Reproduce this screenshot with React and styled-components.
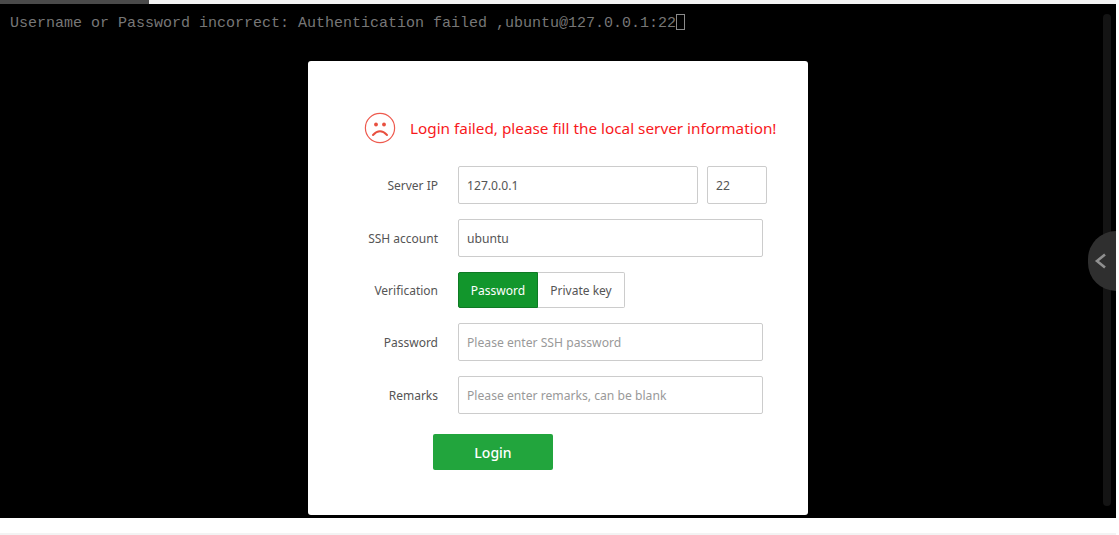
import React from "react";
import styled, { createGlobalStyle } from "styled-components";

const Global = createGlobalStyle`
  html, body { margin: 0; padding: 0; background: #fff; }
  body { font-family: "Noto Sans", "Open Sans", sans-serif; }
`;

const Page = styled.div`
  width: 1116px;
  height: 535px;
  display: flex;
  flex-direction: column;
  overflow: hidden;
`;

const TabBar = styled.div`
  height: 4px;
  flex: none;
  background: #f3f3f3;
`;

const ActiveTab = styled.div`
  width: 149px;
  height: 100%;
  background: #4a4a4a;
`;

const Terminal = styled.div`
  position: relative;
  height: 514px;
  flex: none;
  background: #000;
  padding: 10px 10px 0;
  box-sizing: border-box;
`;

const TermLine = styled.div`
  display: flex;
  align-items: center;
  height: 16px;
  font: 15px/16px "Liberation Mono", monospace;
  color: #777;
  white-space: pre;
`;

const TermText = styled.span`
  display: block;
  padding-top: 3px;
`;

const Cursor = styled.span`
  display: inline-block;
  width: 9px;
  height: 16px;
  box-sizing: border-box;
  border: 1px solid #8a8a8a;
`;

const Scrollbar = styled.div`
  position: absolute;
  top: 10px;
  right: 5px;
  width: 8px;
  height: 492px;
  border-radius: 4px;
  background: #141414;
`;

const Handle = styled.div`
  position: absolute;
  right: 0;
  top: 227px;
  width: 28px;
  height: 60px;
  border-radius: 30px 0 0 30px;
  background: #2f2f2f;
  display: flex;
  align-items: center;
  padding-left: 6px;
  box-sizing: border-box;
`;

const Modal = styled.div`
  position: absolute;
  left: 308px;
  top: 57px;
  width: 500px;
  height: 454px;
  box-sizing: border-box;
  background: #fff;
  border-radius: 3px;
  padding-top: 51px;
`;

const Title = styled.div`
  display: flex;
  align-items: center;
  gap: 14px;
  height: 32px;
  margin: 0 0 22px 56px;
  font-size: 15.3px;
  color: #f8191c;
  white-space: nowrap;
`;

const Row = styled.div`
  display: flex;
  align-items: center;
  height: ${(p) => p.$h || 38}px;
  margin-bottom: ${(p) => p.$mb ?? 15}px;
`;

const Label = styled.label`
  flex: none;
  width: 130px;
  margin-right: 20px;
  text-align: right;
  font-size: 12px;
  color: #555;
`;

const Input = styled.input`
  box-sizing: border-box;
  width: ${(p) => p.$w || 305}px;
  height: 38px;
  margin-right: ${(p) => p.$mr || 0}px;
  padding: 0 8px;
  border: 1px solid #ccc;
  border-radius: 2px;
  outline: none;
  background: #fff;
  font: 12.15px "Noto Sans", sans-serif;
  color: #555;
  &::placeholder { color: #999; opacity: 1; }
`;

const Segmented = styled.div`
  display: flex;
  height: 36px;
`;

const Segment = styled.div`
  box-sizing: border-box;
  display: flex;
  align-items: center;
  justify-content: center;
  height: 36px;
  width: ${(p) => p.$w}px;
  font-size: 12px;
  border: 1px solid ${(p) => (p.$active ? "#0e7a24" : "#ccc")};
  border-left-width: ${(p) => (p.$active ? 1 : 0)}px;
  border-radius: ${(p) => (p.$active ? "2px 0 0 2px" : "0 2px 2px 0")};
  background: ${(p) => (p.$active ? "#12962c" : "#fff")};
  color: ${(p) => (p.$active ? "#fff" : "#555")};
`;

const LoginButton = styled.button`
  display: block;
  width: 120px;
  height: 36px;
  margin: 20px 0 0 125px;
  padding: 0;
  border: 0;
  border-radius: 2px;
  background: #22a53d;
  color: #fff;
  font: 500 14px "Noto Sans", sans-serif;
`;

const Footer = styled.div`
  flex: 1;
  background: #fff;
  display: flex;
  align-items: flex-end;
`;

const FooterLine = styled.div`
  width: 100%;
  height: 2px;
  background: #f3f3f3;
`;

const Sad = () => (
  <svg width="32" height="32" viewBox="0 0 32 32" fill="none" stroke="#ee5a4e">
    <circle cx="16" cy="16" r="14.6" strokeWidth="1.2" />
    <circle cx="12" cy="12.5" r="1.9" fill="#e8503f" stroke="none" />
    <circle cx="20" cy="12.5" r="1.9" fill="#e8503f" stroke="none" />
    <path d="M9 23 Q16 15.5 23 23" strokeWidth="2" strokeLinecap="round" stroke="#e8503f" />
  </svg>
);

const Chevron = () => (
  <svg width="12" height="16" viewBox="0 0 12 16" fill="none">
    <path d="M11 1.5 L3 8 L11 14.5" stroke="#909090" strokeWidth="2.6" />
  </svg>
);

export default function App() {
  return (
    <>
      <Global />
      <Page>
        <TabBar>
          <ActiveTab />
        </TabBar>
        <Terminal>
          <TermLine>
            <TermText>Username or Password incorrect: Authentication failed ,ubuntu@127.0.0.1:22</TermText>
            <Cursor />
          </TermLine>
          <Scrollbar />
          <Handle>
            <Chevron />
          </Handle>
          <Modal>
            <Title>
              <Sad />
              Login failed, please fill the local server information!
            </Title>
            <Row>
              <Label>Server IP</Label>
              <Input $w={240} $mr={9} defaultValue="127.0.0.1" />
              <Input $w={60} defaultValue="22" />
            </Row>
            <Row>
              <Label>SSH account</Label>
              <Input defaultValue="ubuntu" />
            </Row>
            <Row $h={36}>
              <Label>Verification</Label>
              <Segmented>
                <Segment $active $w={80}>Password</Segment>
                <Segment $w={87}>Private key</Segment>
              </Segmented>
            </Row>
            <Row>
              <Label>Password</Label>
              <Input placeholder="Please enter SSH password" />
            </Row>
            <Row>
              <Label>Remarks</Label>
              <Input placeholder="Please enter remarks, can be blank" />
            </Row>
            <LoginButton>Login</LoginButton>
          </Modal>
        </Terminal>
        <Footer>
          <FooterLine />
        </Footer>
      </Page>
    </>
  );
}
